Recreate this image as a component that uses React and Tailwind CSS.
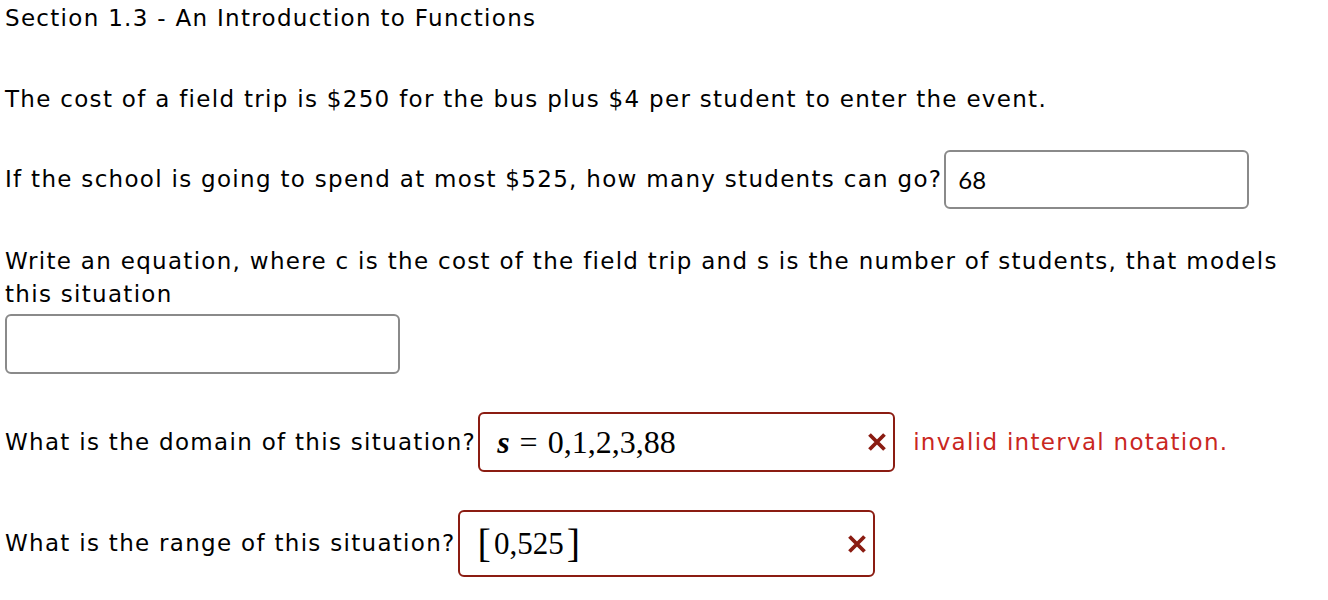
export default function App() {
  return (
    <div
      className="bg-white px-[5px] text-black text-[23px] leading-[33px] tracking-[1.3px]"
      style={{ fontFamily: '"DejaVu Sans", "Open Sans", sans-serif' }}
    >
      <h1 className="pt-[2px] text-[23px] leading-[33px]">Section 1.3 - An Introduction to Functions</h1>

      <p className="mt-[48px]">The cost of a field trip is $250 for the bus plus $4 per student to enter the event.</p>

      <div className="mt-[34px] flex items-center">
        <span>If the school is going to spend at most $525, how many students can go?</span>
        <div
          className="ml-[2px] flex h-[59px] w-[305px] items-center rounded-[6px] border-2 border-[#8a8a8a] px-[12px] text-[24px] tracking-normal"
          style={{ fontFamily: 'Lato, sans-serif' }}
        >
          68
        </div>
      </div>

      <p className="mt-[36px]">
        Write an equation, where c is the cost of the field trip and s is the number of students, that models this situation
      </p>
      <div className="mt-[3px] h-[60px] w-[395px] rounded-[6px] border-2 border-[#8a8a8a]" />

      <div className="mt-[38px] flex items-center">
        <span>What is the domain of this situation?</span>
        <div className="ml-[2px] flex h-[60px] w-[417px] items-center rounded-[6px] border-2 border-[#8b1c12] pl-[17px] pr-[6px] tracking-normal">
          <span className="flex flex-1 items-center text-[32px]" style={{ fontFamily: '"Liberation Serif", serif' }}>
            <i className="font-bold">s</i>
            <span className="mx-[10px]">=</span>
            <span>0,1,2,3,88</span>
          </span>
          <XMark />
        </div>
        <span className="ml-[18px] text-[#c9271f]">invalid interval notation.</span>
      </div>

      <div className="mt-[38px] flex items-center">
        <span>What is the range of this situation?</span>
        <div className="ml-[2px] flex h-[67px] w-[417px] items-center rounded-[6px] border-2 border-[#8b1c12] pl-[18px] pr-[6px] tracking-normal">
          <span className="flex flex-1 items-center text-[31px]" style={{ fontFamily: '"Liberation Serif", serif' }}>
            <span className="text-[40px] font-light leading-none">[</span>
            <span className="mx-[3px]">0,525</span>
            <span className="text-[40px] font-light leading-none">]</span>
          </span>
          <XMark />
        </div>
      </div>
    </div>
  )
}

function XMark() {
  return (
    <svg width="20" height="20" viewBox="0 0 20 20" className="shrink-0">
      <path d="M2.5 2.5 L17.5 17.5 M17.5 2.5 L2.5 17.5" stroke="#8b1c12" strokeWidth="3.8" strokeLinecap="butt" />
    </svg>
  )
}
